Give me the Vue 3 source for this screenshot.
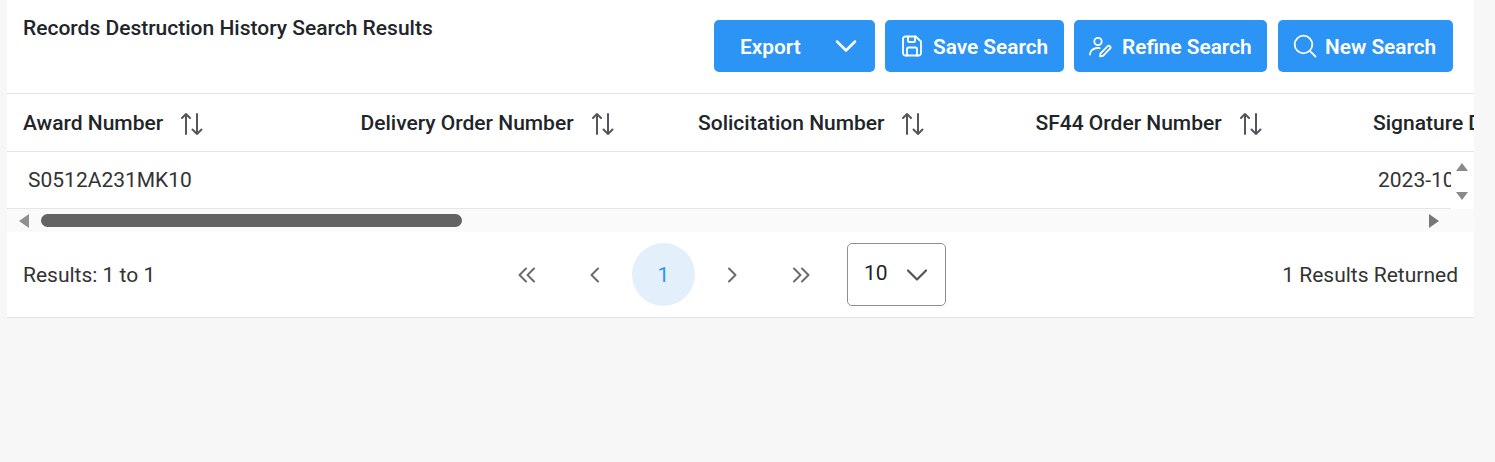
<template>
  <div class="page">
    <section class="panel">
      <header class="toolbar">
        <h2 class="title">Records Destruction History Search Results</h2>
        <div class="actions">
          <button class="btn btn-export">
            <span>Export</span>
            <svg width="24" height="24" viewBox="0 0 24 24" class="ico"><path d="M3 7.500 12 16.500l9-9" /></svg>
          </button>
          <button class="btn btn-save">
            <svg width="24" height="24" viewBox="0 0 24 24" class="ico thin">
              <path d="M5.500 2.500h10.200L21 7.500V19A2.500 2.500 0 0 1 18.500 21.500H5.500A2.500 2.500 0 0 1 3 19V5A2.500 2.500 0 0 1 5.500 2.500Z" />
              <path d="M8 2.500v4.500A1 1 0 0 0 9 8h5a1 1 0 0 0 1-1V2.500" />
              <path d="M7 21.500v-6.500a1.500 1.500 0 0 1 1.500-1.500h7a1.500 1.500 0 0 1 1.500 1.500v6.500" />
            </svg>
            <span>Save Search</span>
          </button>
          <button class="btn btn-refine">
            <svg width="24" height="24" viewBox="0 0 24 24" class="ico thin">
              <circle cx="10" cy="7.500" r="3.700" />
              <path d="M2 20.500c0-4 3.500-6.500 7.500-6.500 .8 0 1.500.1 2.200.2" />
              <path d="M12.500 19.500l7-7.200a1.700 1.700 0 0 1 2.500 2.400l-7 7.100-3 .6Z" />
            </svg>
            <span>Refine Search</span>
          </button>
          <button class="btn btn-new">
            <svg width="24" height="24" viewBox="0 0 24 24" class="ico thin">
              <circle cx="10.500" cy="10.500" r="8.800" />
              <path d="M16.800 16.800 22.500 22.500" />
            </svg>
            <span>New Search</span>
          </button>
        </div>
      </header>

      <div class="table-head">
        <div v-for="col in columns" :key="col" class="th">
          <span>{{ col }}</span>
          <svg width="22" height="24" viewBox="0 0 22 24" class="sort">
            <path d="M5 22V2M1 6l4-4 4 4" />
            <path d="M16 2v20M11.500 17.500 16 22l4.500-4.500" />
          </svg>
        </div>
      </div>

      <div class="body-wrap">
        <div class="table-body">
          <div v-for="(cell, i) in row" :key="i" class="td">{{ cell }}</div>
        </div>
        <div class="vscroll">
          <span class="tri up"></span>
          <span class="tri down"></span>
        </div>
      </div>

      <div class="hscroll">
        <span class="tri left"></span>
        <div class="track"><div class="thumb"></div></div>
        <span class="tri right"></span>
      </div>

      <footer class="pager">
        <div class="range">Results: 1 to 1</div>
        <nav class="pages">
          <button class="pg pg-first">
            <svg width="20" height="20" viewBox="0 0 20 20" class="chev"><path d="M9 3.500 2.500 10 9 16.500M17 3.500 10.500 10 17 16.500" /></svg>
          </button>
          <button class="pg pg-prev">
            <svg width="20" height="20" viewBox="0 0 20 20" class="chev"><path d="M13 3.500 6.500 10 13 16.500" /></svg>
          </button>
          <button class="pg current">1</button>
          <button class="pg pg-next">
            <svg width="20" height="20" viewBox="0 0 20 20" class="chev"><path d="M7 3.500 13.500 10 7 16.500" /></svg>
          </button>
          <button class="pg pg-last">
            <svg width="20" height="20" viewBox="0 0 20 20" class="chev"><path d="M3 3.500 9.500 10 3 16.500M11 3.500 17.500 10 11 16.500" /></svg>
          </button>
          <div class="size">
            <span>10</span>
            <svg width="24" height="24" viewBox="0 0 24 24" class="size-ico"><path d="M3 7.500 12 16.500l9-9" /></svg>
          </div>
        </nav>
        <div class="count">1 Results Returned</div>
      </footer>
    </section>
  </div>
</template>

<script setup>
const columns = [
  "Award Number",
  "Delivery Order Number",
  "Solicitation Number",
  "SF44 Order Number",
  "Signature Date",
];
const row = ["S0512A231MK10", "", "", "", "2023-10-12"];
</script>

<style>
html,
body {
  margin: 0;
  background: #f7f7f7;
}
</style>

<style scoped>
.page {
  height: 462px;
  padding-left: 7px;
  background: #f7f7f7;
  font-family: Roboto, "Liberation Sans", sans-serif;
  color: #212529;
  overflow: hidden;
}

.panel {
  width: 1467px;
  background: #fff;
  border-bottom: 1px solid #e4e4e4;
}

.toolbar {
  height: 94px;
  box-sizing: border-box;
  display: flex;
  justify-content: space-between;
  padding: 16px 21px 0 16px;
  border-bottom: 1px solid #e4e4e4;
}

.title {
  margin: 0;
  font-size: 21px;
  font-weight: 500;
  line-height: 24px;
  color: #212529;
}

.actions {
  display: flex;
  margin-top: 4px;
}

.btn {
  height: 52px;
  border: none;
  border-radius: 5px;
  background: #2b94f4;
  color: #fff;
  font-family: inherit;
  font-size: 20.800px;
  font-weight: 600;
  display: flex;
  align-items: center;
  padding: 2px 0 0;
}

.btn-export {
  width: 161px;
  padding-left: 26px;
  margin-right: 10px;
  gap: 33px;
}

.btn-save {
  width: 179px;
  padding-left: 15px;
  gap: 9px;
  margin-right: 10px;
}

.btn-refine {
  width: 193px;
  padding-left: 14px;
  gap: 10px;
  margin-right: 11px;
}

.btn-new {
  width: 175px;
  padding-left: 15px;
  gap: 8px;
}

.ico {
  fill: none;
  stroke: #fff;
  stroke-width: 2.500;
  stroke-linecap: round;
  stroke-linejoin: round;
  flex: none;
  margin-top: -2px;
}

.ico.thin {
  stroke-width: 1.800;
}

.table-head {
  height: 58px;
  box-sizing: border-box;
  display: flex;
  border-bottom: 1px solid #e4e4e4;
  overflow: hidden;
}

.th {
  flex: 0 0 337.500px;
  box-sizing: border-box;
  padding-left: 16px;
  display: flex;
  align-items: center;
  gap: 18px;
  font-size: 21px;
  font-weight: 500;
  white-space: nowrap;
}

.sort {
  fill: none;
  stroke: #55555d;
  stroke-width: 2;
  stroke-linecap: round;
  stroke-linejoin: round;
  flex: none;
  margin-top: 2px;
}

.body-wrap {
  height: 57px;
  display: flex;
}

.table-body {
  width: 1444px;
  display: flex;
  overflow: hidden;
  box-sizing: border-box;
  border-bottom: 1px solid #e4e4e4;
}

.td {
  flex: 0 0 337.500px;
  box-sizing: border-box;
  padding-left: 21px;
  line-height: 56px;
  font-size: 21px;
  color: #333;
  white-space: nowrap;
}

.vscroll {
  width: 23px;
  display: flex;
  flex-direction: column;
  align-items: center;
  gap: 21px;
  padding-top: 11px;
  box-sizing: border-box;
  padding-right: 1px;
}

.tri {
  display: block;
  width: 0;
  height: 0;
  border-style: solid;
  border-color: transparent;
}

.tri.up {
  border-width: 0 6px 8px;
  border-bottom-color: #8a8a8a;
}

.tri.down {
  border-width: 8px 6px 0;
  border-top-color: #8a8a8a;
}

.tri.left {
  border-width: 7px 10px 7px 0;
  border-right-color: #8f8f8f;
}

.tri.right {
  border-width: 7px 0 7px 10px;
  border-left-color: #777;
}

.hscroll {
  height: 23px;
  background: #fafafa;
  display: flex;
  align-items: center;
  padding-left: 12px;
  box-sizing: border-box;
}

.track {
  width: 1384px;
  margin-left: 12px;
}

.thumb {
  width: 421px;
  height: 13px;
  border-radius: 7px;
  background: #636363;
}

.hscroll .tri.right {
  margin-left: 4px;
}

.pager {
  height: 85px;
  display: grid;
  grid-template-columns: 472px auto 1fr;
  align-items: center;
  padding: 0 16px;
  font-size: 21px;
  color: #333;
}

.range,
.count {
  white-space: nowrap;
}

.count {
  text-align: right;
}

.pages {
  display: flex;
  align-items: center;
  gap: 5.500px;
}

.pg {
  width: 63px;
  height: 63px;
  border: none;
  border-radius: 50%;
  background: transparent;
  padding: 0;
  display: flex;
  align-items: center;
  justify-content: center;
  font-family: inherit;
  font-size: 21px;
}

.pg.current {
  background: #e3f0fc;
  color: #2b94f4;
}

.chev {
  fill: none;
  stroke: #6b6b6b;
  stroke-width: 2;
  stroke-linecap: round;
  stroke-linejoin: round;
}

.size {
  width: 99px;
  height: 63px;
  box-sizing: border-box;
  border: 1px solid #8f8f8f;
  border-radius: 5px;
  margin-left: 9.500px;
  display: flex;
  align-items: center;
  padding: 0 16px 4px 16px;
  justify-content: space-between;
  font-size: 21px;
  color: #212529;
}

.size-ico {
  fill: none;
  stroke: #555;
  stroke-width: 2.200;
  stroke-linecap: round;
  stroke-linejoin: round;
  margin-top: 5px;
}
</style>
